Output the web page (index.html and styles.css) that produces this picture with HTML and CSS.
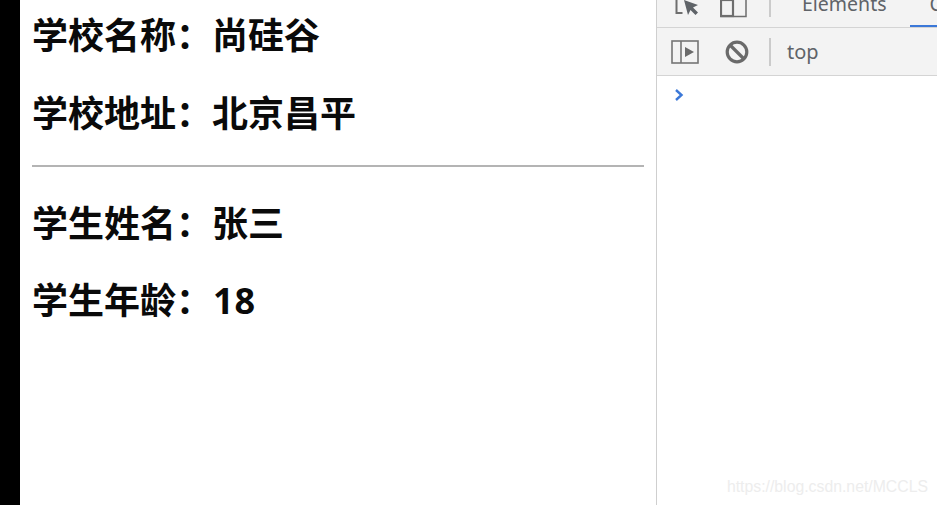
FILE: index.html
```html
<!DOCTYPE html>
<html lang="zh">
<head>
<meta charset="utf-8">
<title>学校信息</title>
<link rel="stylesheet" href="styles.css">
</head>
<body>
<div class="app">
  <div class="strip"></div>
  <main class="page">
    <h2 class="line">学校名称：尚硅谷</h2>
    <h2 class="line">学校地址：北京昌平</h2>
    <hr class="rule">
    <h2 class="line line-tight">学生姓名：张三</h2>
    <h2 class="line">学生年龄：<span class="num">18</span></h2>
  </main>
  <aside class="devtools">
    <div class="tabs">
      <svg class="ico-inspect" width="24" height="16" viewBox="0 0 24 16"><path d="M1.500 0v13h6" fill="none" stroke="#6e6e6e" stroke-width="2"/><path d="M9 0l14 5-5 2.500 5 5-2.500 2.500-5-5-2.500 5z" fill="#5f6368"/></svg>
      <svg class="ico-device" width="28" height="18" viewBox="0 0 28 18"><path d="M1 0v16.500h25V0" fill="none" stroke="#6e6e6e" stroke-width="1.500"/><rect x="1" y="0" width="12" height="16" fill="none" stroke="#6e6e6e" stroke-width="2.200"/></svg>
      <span class="sep sep-tab"></span>
      <span class="tab">Elements</span>
      <span class="tab tab-active">Console</span>
    </div>
    <div class="toolbar">
      <svg class="ico-sidebar" width="28" height="24" viewBox="0 0 28 24"><rect x="1" y="1" width="26" height="22" fill="none" stroke="#757575" stroke-width="1.600"/><path d="M10 1v22" stroke="#757575" stroke-width="1.600"/><path d="M14 7l9 5-9 5z" fill="#6a6a6a"/></svg>
      <svg class="ico-block" width="24" height="24" viewBox="0 0 24 24"><circle cx="12" cy="12" r="9.800" fill="none" stroke="#6a6a6a" stroke-width="3.200"/><path d="M5 5l14 14" stroke="#6a6a6a" stroke-width="3.200"/></svg>
      <span class="sep sep-bar"></span>
      <span class="context">top</span>
    </div>
    <div class="console">
      <svg width="10" height="14" viewBox="0 0 10 14"><path d="M2 2l5.500 5L2 12" fill="none" stroke="#3b78d8" stroke-width="2.400"/></svg>
    </div>
    <div class="mark">https://blog.csdn.net/MCCLS</div>
  </aside>
</div>
</body>
</html>
```
FILE: styles.css
```css
html, body {
  margin: 0;
  padding: 0;
  height: 100%;
  background: #fff;
  overflow: hidden;
}
.app {
  display: grid;
  grid-template-columns: 20px 636px 281px;
  height: 505px;
  width: 937px;
  font-family: "Open Sans", "Noto Sans CJK SC", sans-serif;
}
.strip {
  background: #000;
}
.page {
  padding: 2px 12px 0;
  color: #0a0a0a;
}
.line {
  margin: 0 0 10px;
  font-size: 36px;
  line-height: 68px;
  font-weight: 700;
  white-space: nowrap;
}
.line-tight {
  margin-bottom: 9px;
}
.num {
  margin-left: 1px;
  letter-spacing: 1px;
}
.rule {
  border: 0;
  border-top: 2px solid #b4b4b4;
  height: 0;
  margin: 17px 0 23px;
}
.devtools {
  border-left: 1px solid #cfcfcf;
  display: flex;
  flex-direction: column;
  position: relative;
  font-family: "Noto Sans", "Liberation Sans", sans-serif;
  overflow: hidden;
}
.tabs {
  height: 27px;
  background: #f3f3f3;
  border-bottom: 1px solid #d4d4d4;
  display: flex;
  align-items: flex-end;
  overflow: hidden;
}
.ico-inspect {
  margin: 0 0 11px 18px;
  flex: none;
}
.ico-device {
  margin: 0 0 9px 21px;
  flex: none;
}
.sep {
  display: block;
  background: #cbcbcb;
  width: 2px;
  flex: none;
}
.sep-tab {
  height: 18px;
  margin: 0 0 10px 21px;
}
.tab {
  font-size: 19.500px;
  line-height: 22px;
  color: #5f6368;
  flex: none;
  margin: 0 0 12px 31px;
}
.tab-active {
  margin-left: 23px;
  padding-left: 20px;
  position: relative;
}
.tab-active::after {
  content: "";
  position: absolute;
  left: 0;
  right: 0;
  bottom: -12px;
  height: 2px;
  background: #3b78d8;
}
.toolbar {
  height: 47px;
  background: #f3f3f3;
  border-bottom: 1px solid #d4d4d4;
  display: flex;
  align-items: center;
}
.ico-sidebar {
  margin-left: 14px;
  flex: none;
}
.ico-block {
  margin-left: 26px;
  flex: none;
}
.sep-bar {
  height: 28px;
  margin-left: 20px;
}
.context {
  font-size: 20px;
  line-height: 24px;
  color: #5f6368;
  margin-left: 16px;
}
.console {
  padding: 9px 0 0 17px;
}
.mark {
  position: absolute;
  right: 9px;
  bottom: 8px;
  font-family: "Liberation Sans", sans-serif;
  font-size: 15.800px;
  line-height: 20px;
  color: #ededed;
}
```
